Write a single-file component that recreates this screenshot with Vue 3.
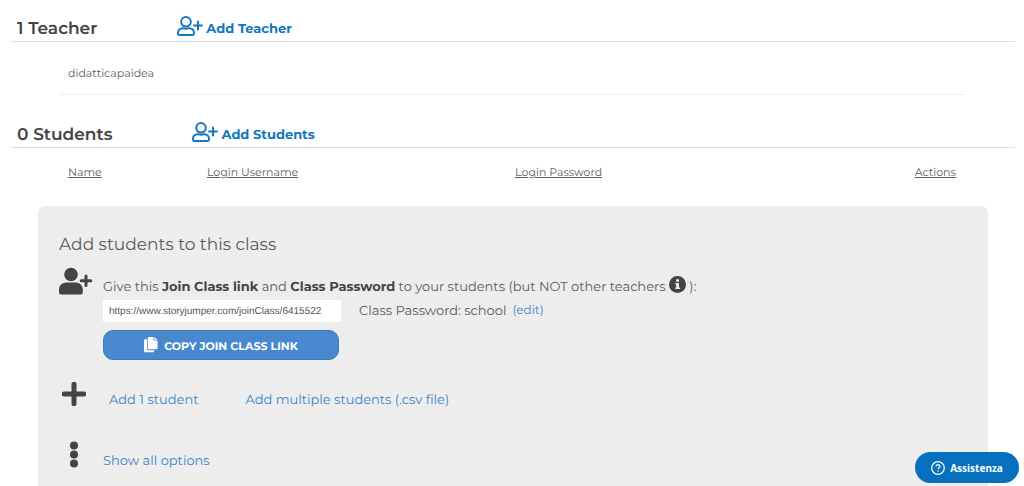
<script setup>
import { ref } from 'vue'

const joinLink = ref('https://www.storyjumper.com/joinClass/6415522')
const teachers = ['didatticapaidea']
</script>

<template>
  <main class="page">
    <section>
      <header class="section-head">
        <h2>1 Teacher</h2>
        <a class="add" href="#">
          <svg class="add-icon" viewBox="0 0 26 20" aria-hidden="true">
            <circle cx="9" cy="5.8" r="4.8" />
            <path d="M5.7 12.2h.6c1.700.8 3.700.8 5.400 0h.6c2.600 0 4.700 2 4.700 4.600v.8c0 .9-.6 1.400-1.400 1.400H2.400C1.600 19 1 18.500 1 17.600v-.8c0-2.600 2.100-4.600 4.700-4.600zM21 5.500v8M17 9.500h8" />
          </svg>
          <span>Add Teacher</span>
        </a>
      </header>
      <ul class="teachers">
        <li v-for="name in teachers" :key="name">{{ name }}</li>
      </ul>
    </section>

    <section>
      <header class="section-head">
        <h2>0 Students</h2>
        <a class="add" href="#">
          <svg class="add-icon" viewBox="0 0 26 20" aria-hidden="true">
            <circle cx="9" cy="5.8" r="4.8" />
            <path d="M5.7 12.2h.6c1.700.8 3.700.8 5.400 0h.6c2.600 0 4.700 2 4.700 4.600v.8c0 .9-.6 1.400-1.400 1.400H2.400C1.600 19 1 18.500 1 17.600v-.8c0-2.600 2.100-4.600 4.700-4.600zM21 5.500v8M17 9.500h8" />
          </svg>
          <span>Add Students</span>
        </a>
      </header>
      <table class="students">
        <thead>
          <tr>
            <th class="col-name" scope="col">Name</th>
            <th class="col-user" scope="col">Login Username</th>
            <th class="col-pass" scope="col">Login Password</th>
            <th scope="col">Actions</th>
          </tr>
        </thead>
      </table>
    </section>

    <section class="panel">
      <h3>Add students to this class</h3>

      <div class="option">
        <svg class="join-icon" viewBox="0 0 34 28" aria-hidden="true">
          <circle cx="12" cy="7.500" r="6.800" />
          <path d="M7.500 15.500h9c4.200 0 7.300 3 7.300 7.200v2.600c0 1.500-.8 2.200-2.100 2.200H2.200C.9 27.500 0 26.800 0 25.300v-2.600c0-4.200 3.300-7.200 7.500-7.200z" />
          <path class="stroke" d="M27 9v9.500M22.200 13.700h9.600" />
        </svg>
        <div class="join">
          <p>
            Give this <b>Join Class link</b> and <b>Class Password</b> to your students (but NOT other teachers
            <svg class="info" viewBox="0 0 16 16" role="img" aria-label="Info">
              <circle cx="8" cy="8" r="8" />
              <path d="M6.700 3h2.700v2.300H6.700zM6 6.500h3.400v4.300h.9v1.500H5.900v-1.500h.9V8H6z" />
            </svg>
            ):
          </p>
          <div class="join-row">
            <input v-model="joinLink" type="text" readonly aria-label="Join Class link" />
            <span class="password">Class Password: school</span>
            <a class="edit" href="#">(edit)</a>
          </div>
          <button type="button" class="copy">
            <svg viewBox="0 0 14 16" aria-hidden="true">
              <path d="M5 0h4.500v3.500H13.500V11c0 .8-.5 1.300-1.300 1.300H5c-.8 0-1.300-.5-1.300-1.300V1.300C3.700.5 4.200 0 5 0zM10.300 0l3.200 2.800h-3.200zM0 3.500C0 2.700.5 2.200 1.300 2.200H3V12c0 .8.400 1.200 1.200 1.200h6v.8c0 .8-.5 1.300-1.300 1.300H1.300C.5 15.300 0 14.800 0 14z" />
            </svg>
            COPY JOIN CLASS LINK
          </button>
        </div>
      </div>

      <div class="option add-option">
        <svg class="plus-icon" viewBox="0 0 24 24" aria-hidden="true">
          <path d="M12 2.200v19.600M2.200 12h19.600" />
        </svg>
        <div class="links">
          <a href="#">Add 1 student</a>
          <a href="#">Add multiple students (.csv file)</a>
        </div>
      </div>

      <div class="option more-option">
        <svg class="dots-icon" viewBox="0 0 10 27" aria-hidden="true">
          <circle cx="5" cy="4.500" r="4" />
          <circle cx="5" cy="13.500" r="4" />
          <circle cx="5" cy="22.500" r="4" />
        </svg>
        <a class="more" href="#">Show all options</a>
      </div>
    </section>

    <button type="button" class="help">
      <svg viewBox="0 0 14 14" aria-hidden="true">
        <circle cx="7" cy="7" r="6.300" />
        <path d="M5.100 5.600c0-1.200.8-1.900 1.900-1.900s1.900.7 1.900 1.700c0 1.300-1.800 1.400-1.800 2.800M7.100 9.500v1.200" />
      </svg>
      Assistenza
    </button>
  </main>
</template>

<style>
body {
  margin: 0;
  background: #fff;
}
</style>

<style scoped>
.page {
  box-sizing: border-box;
  min-height: 100vh;
  display: flex;
  flex-direction: column;
  font-family: Montserrat, Inter, "Open Sans", sans-serif;
  font-size: 13px;
  line-height: 24px;
  text-rendering: geometricPrecision;
  color: #5c5c5c;
}

h2,
h3,
p,
ul {
  margin: 0;
  padding: 0;
}

a {
  color: #3d85c6;
  text-decoration: none;
}

.section-head {
  display: flex;
  align-items: center;
  gap: 80px;
  box-sizing: border-box;
  height: 42px;
  margin: 0 9px 0 11px;
  padding: 17px 0 0 6px;
  border-bottom: 1px solid #dcdcdc;
}

h2 {
  font-size: 17px;
  font-weight: 600;
  color: #444;
}

.add {
  display: flex;
  align-items: center;
  gap: 3px;
  color: #1276c0;
  font-weight: 700;
}

.add-icon {
  width: 26px;
  height: 20px;
  margin-bottom: 6px;
  fill: none;
  stroke: currentColor;
  stroke-width: 2;
  stroke-linecap: round;
}

.teachers {
  list-style: none;
  margin: 0 59px 11px 60px;
}

.teachers li {
  padding: 19px 8px 9px;
  border-bottom: 1px solid #eee;
}

.students {
  width: calc(100% - 128px);
  margin: 12px 60px 22px 68px;
  border-collapse: collapse;
  table-layout: fixed;
}

.students th {
  padding: 0;
  font-weight: 400;
  text-align: left;
  text-decoration: underline;
}

.teachers,
.students {
  font-size: 11px;
}

.col-name {
  width: 15.500%;
}

.col-user {
  width: 34.400%;
}

.col-pass {
  width: 44.600%;
}

.panel {
  flex: 1;
  margin: 0 36px 0 38px;
  padding: 27px 20px 14px 21px;
  border-radius: 7px 7px 0 0;
  background: #ededed;
}

h3 {
  margin-bottom: 10px;
  font-size: 17px;
  font-weight: 400;
}

.option {
  display: grid;
  grid-template-columns: 44px 1fr;
}

.option > svg {
  fill: #444;
}

.join-icon {
  width: 34px;
  height: 28px;
}

.stroke,
.plus-icon {
  stroke: #444;
  stroke-width: 3;
  stroke-linecap: round;
}

.join {
  padding-top: 8px;
}

.join b {
  font-weight: 700;
  color: #444;
}

.info {
  width: 17px;
  height: 17px;
  vertical-align: -2px;
  fill: #444;
}

.info path {
  fill: #ededed;
}

.join-row {
  display: flex;
  align-items: center;
  height: 24px;
}

.join-row input {
  box-sizing: border-box;
  width: 238px;
  height: 22px;
  padding: 0 6px;
  border: 0;
  background: #fff;
  font-family: "Liberation Sans", Arial, sans-serif;
  font-size: 10px;
  text-rendering: geometricPrecision;
  color: #555;
}

.password {
  margin-left: 18px;
}

.edit {
  margin-left: 6px;
  font-size: 12px;
}

.copy {
  display: flex;
  align-items: center;
  justify-content: center;
  gap: 6px;
  box-sizing: border-box;
  width: 236px;
  height: 30px;
  margin-top: 7px;
  padding: 1px 0 0;
  border: 1px solid #3f79b8;
  border-radius: 10px;
  background: #4788cf;
  color: #fff;
  font: inherit;
  font-size: 11px;
  font-weight: 700;
  text-rendering: geometricPrecision;
}

.copy svg {
  width: 14px;
  height: 16px;
  margin-bottom: 2px;
  fill: #fff;
}

.add-option {
  margin-top: 22px;
}

.plus-icon {
  width: 24px;
  height: 24px;
  margin-left: 3px;
  stroke-width: 5;
}

.links {
  display: flex;
  gap: 47px;
  padding: 6px 0 0 6px;
}

.more-option {
  margin-top: 29px;
}

.dots-icon {
  width: 10px;
  height: 27px;
  margin-left: 10px;
}

.more {
  justify-self: start;
  padding-top: 8px;
}

.help {
  position: fixed;
  right: 5px;
  bottom: 3px;
  display: flex;
  align-items: center;
  justify-content: center;
  gap: 5px;
  width: 104px;
  height: 31px;
  padding: 0;
  border: 0;
  border-radius: 16px;
  background: #0571be;
  color: #fff;
  font-family: "Noto Sans", sans-serif;
  font-size: 10px;
  font-weight: 700;
}

.help svg {
  width: 14px;
  height: 14px;
  fill: none;
  stroke: #fff;
  stroke-width: 1.200;
}
</style>
